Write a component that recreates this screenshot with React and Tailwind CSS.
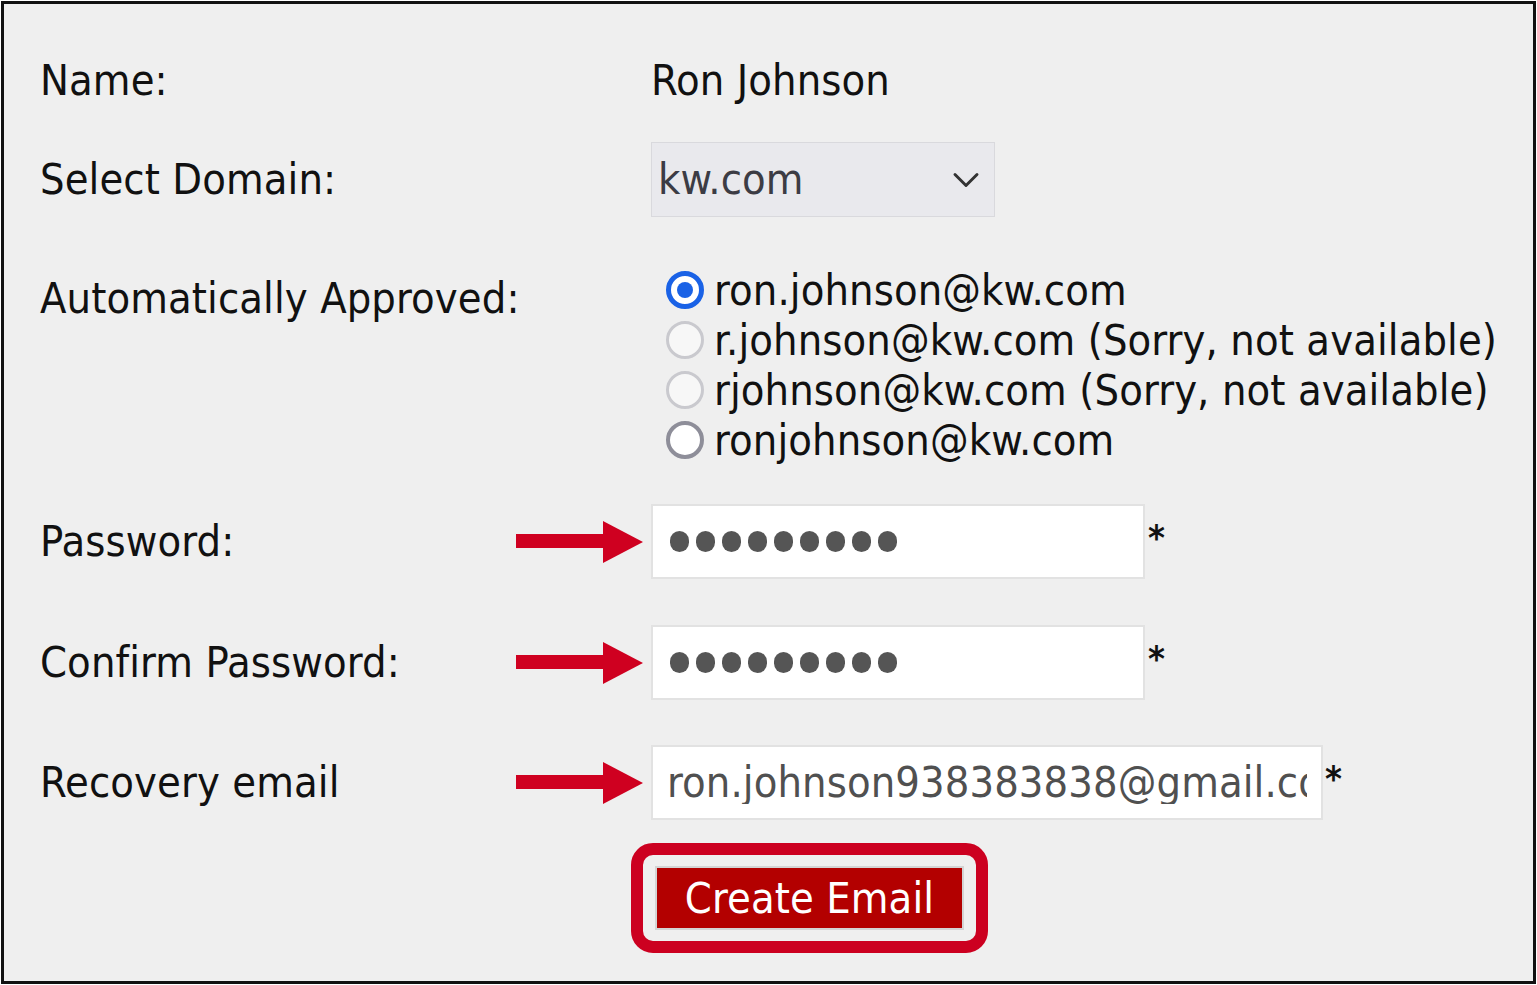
import { ChevronDown } from "lucide-react"

const font = { fontFamily: '"DejaVu Sans Condensed", "DejaVu Sans", Tahoma, sans-serif' }

const Arrow = () => (
  <svg width="127" height="42" viewBox="0 0 127 42" className="shrink-0">
    <rect x="0" y="13" width="90" height="14" fill="#cf0020" />
    <polygon points="87,0 127,21 87,42" fill="#cf0020" />
  </svg>
)

const Radio = ({ state }) => {
  if (state === "checked") {
    return (
      <span className="w-[38px] h-[38px] rounded-full border-[5px] border-[#1a62e6] bg-white flex items-center justify-center shrink-0">
        <span className="w-[16px] h-[16px] rounded-full bg-[#1a62e6]"></span>
      </span>
    )
  }
  if (state === "disabled") {
    return <span className="w-[38px] h-[38px] rounded-full border-[3px] border-[#c9c9ce] bg-[#f7f7f7] shrink-0"></span>
  }
  return <span className="w-[38px] h-[38px] rounded-full border-[4px] border-[#8e8e99] bg-white shrink-0"></span>
}

const options = [
  { state: "checked", text: "ron.johnson@kw.com" },
  { state: "disabled", text: "r.johnson@kw.com (Sorry, not available)" },
  { state: "disabled", text: "rjohnson@kw.com (Sorry, not available)" },
  { state: "normal", text: "ronjohnson@kw.com" },
]

const Dots = () => (
  <div className="flex gap-[7px]">
    {[...Array(9)].map((_, i) => (
      <span key={i} className="w-[19px] h-[21px] rounded-full bg-[#555555]"></span>
    ))}
  </div>
)

const Star = ({ ml }) => (
  <span className={`self-start mt-[16px] text-[36px] font-bold ${ml}`}>*</span>
)

const App = () => {
  return (
    <div className="w-[1537px] h-[985px] bg-white p-px" style={font}>
      <div className="h-full border-[3px] border-[#111111] bg-[#efefef] text-[43px] text-[#111111] leading-none tracking-[0.1px]">
        {/* Name */}
        <div className="flex items-center h-[60px] mt-[46px]">
          <div className="w-[647px] pl-[36px]">Name:</div>
          <div>Ron Johnson</div>
        </div>

        {/* Domain */}
        <div className="flex items-center h-[75px] mt-[32px]">
          <div className="w-[647px] pl-[36px]">Select Domain:</div>
          <div className="w-[344px] h-[75px] bg-[#e9e9ed] border border-[#d9d9dd] flex items-center justify-between pl-[6px] pr-[6px] text-[#3c3c44]">
            <span>kw.com</span>
            <ChevronDown size={44} strokeWidth={1.6} className="text-[#333333]" />
          </div>
        </div>

        {/* Approved */}
        <div className="flex mt-[48px]">
          <div className="w-[647px] pl-[36px] pt-[12px]">Automatically Approved:</div>
          <div className="flex flex-col pl-[15px]">
            {options.map((o) => (
              <div key={o.text} className="flex items-center h-[50px] gap-[10px]">
                <Radio state={o.state} />
                <span>{o.text}</span>
              </div>
            ))}
          </div>
        </div>

        {/* Password */}
        <div className="flex items-center h-[75px] mt-[39px]">
          <div className="w-[647px] pl-[36px] pr-[8px] flex items-center justify-between">
            <span>Password:</span>
            <Arrow />
          </div>
          <div className="w-[494px] h-[75px] bg-white border-2 border-[#e2e2e2] flex items-center pl-[17px]">
            <Dots />
          </div>
          <Star ml="ml-[3px]" />
        </div>

        {/* Confirm */}
        <div className="flex items-center h-[75px] mt-[46px]">
          <div className="w-[647px] pl-[36px] pr-[8px] flex items-center justify-between">
            <span>Confirm Password:</span>
            <Arrow />
          </div>
          <div className="w-[494px] h-[75px] bg-white border-2 border-[#e2e2e2] flex items-center pl-[17px]">
            <Dots />
          </div>
          <Star ml="ml-[3px]" />
        </div>

        {/* Recovery */}
        <div className="flex items-center h-[75px] mt-[45px]">
          <div className="w-[647px] pl-[36px] pr-[8px] flex items-center justify-between">
            <span>Recovery email</span>
            <Arrow />
          </div>
          <div className="w-[672px] h-[75px] bg-white border-2 border-[#e2e2e2] flex items-center pl-[14px] pr-[14px]">
            <div className="overflow-hidden whitespace-nowrap text-[#505050]">ron.johnson938383838@gmail.com</div>
          </div>
          <Star ml="ml-[2px]" />
        </div>

        {/* Button */}
        <div className="flex mt-[23px] pl-[627px]">
          <div className="border-[12px] border-[#cc0020] rounded-[22px] px-[12px] pt-[11px] pb-[11px]">
            <button className="w-[309px] h-[64px] bg-[#b30000] border-2 border-[#d4d4d4] text-white flex items-center justify-center">
              Create Email
            </button>
          </div>
        </div>
      </div>
    </div>
  )
}

export default App
